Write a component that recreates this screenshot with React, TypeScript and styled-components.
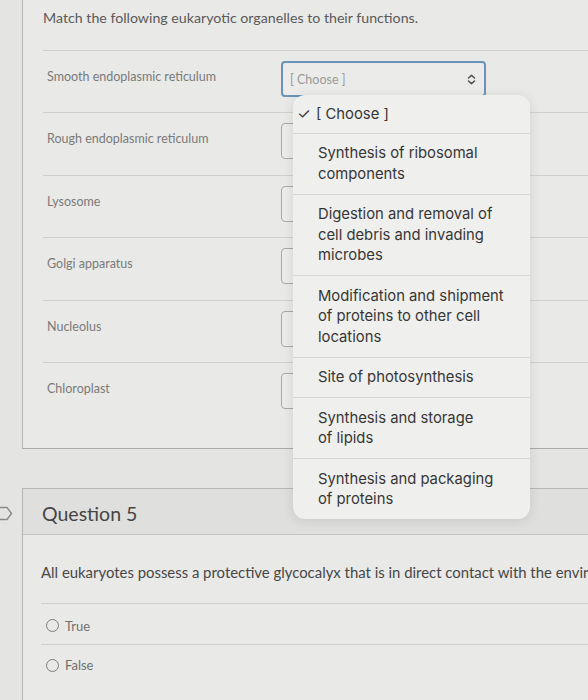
import React from "react";
import styled, { createGlobalStyle } from "styled-components";

const GlobalStyle = createGlobalStyle`
  html, body {
    margin: 0;
    padding: 0;
    background: #e4e4e2;
  }
  body {
    font-family: Lato, "Open Sans", sans-serif;
  }
`;

const organelles = [
  "Smooth endoplasmic reticulum",
  "Rough endoplasmic reticulum",
  "Lysosome",
  "Golgi apparatus",
  "Nucleolus",
  "Chloroplast",
];

const options: string[][] = [
  ["Synthesis of ribosomal", "components"],
  ["Digestion and removal of", "cell debris and invading", "microbes"],
  ["Modification and shipment", "of proteins to other cell", "locations"],
  ["Site of photosynthesis"],
  ["Synthesis and storage", "of lipids"],
  ["Synthesis and packaging", "of proteins"],
];

const Page = styled.div`
  position: relative;
  display: flex;
  flex-direction: column;
  width: 588px;
  height: 700px;
  overflow: hidden;
  padding-left: 22px;
  box-sizing: border-box;
  background: #e4e4e2;
`;

const Card = styled.section<{ $top?: number }>`
  flex-shrink: 0;
  margin-top: ${(p) => p.$top ?? 0}px;
  width: 620px;
  border-left: 1px solid #b4b4b2;
  background: #e9e9e7;
  box-sizing: border-box;
`;

const MatchCard = styled(Card)`
  padding-left: 20px;
  border-bottom: 1px solid #a9a9a7;
`;

const QuestionCard = styled(Card)`
  flex: 1 0 auto;
`;

const Prompt = styled.div`
  height: 51px;
  box-sizing: border-box;
  padding-top: 10px;
  font-size: 14.2px;
  line-height: 16px;
  color: #5a5a5a;
  border-bottom: 1px solid #cfcfcd;
`;

const Row = styled.div<{ $last?: boolean }>`
  display: flex;
  align-items: flex-start;
  height: ${(p) => (p.$last ? 85 : 62.4)}px;
  box-sizing: border-box;
  padding-top: 10px;
  border-bottom: ${(p) => (p.$last ? "none" : "1px solid #cfcfcd")};
`;

const Label = styled.div`
  width: 238px;
  padding: 8px 0 0 4px;
  box-sizing: border-box;
  font-size: 12.5px;
  line-height: 16px;
  color: #7a7a7a;
`;

const Select = styled.div<{ $focused?: boolean }>`
  display: flex;
  align-items: center;
  justify-content: space-between;
  width: 205px;
  height: 36px;
  box-sizing: border-box;
  padding: ${(p) => (p.$focused ? "0 8px 0 7px" : "0 8px 0 14px")};
  border: ${(p) => (p.$focused ? "2px solid #6a93ba" : "1px solid #a8a8a6")};
  border-radius: 4px;
  background: #ebebe9;
  font-size: 12.5px;
  color: #9a9a9a;
`;

const Menu = styled.div`
  position: absolute;
  left: 293px;
  top: 95px;
  width: 237px;
  border-radius: 12px;
  background: #efefed;
  box-shadow: 0 2px 12px rgba(0, 0, 0, 0.1);
  overflow: hidden;
  font-family: Inter, "Liberation Sans", sans-serif;
`;

const MenuItem = styled.div<{ $first?: boolean }>`
  padding: ${(p) => (p.$first ? "9px 12px 8px 23px" : "9.5px 12px 9.5px 25px")};
  font-size: 14.8px;
  line-height: 20.5px;
  color: #363636;
  & + & {
    border-top: 1px solid #d6d6d4;
  }
`;

const Check = styled.span`
  display: inline-block;
  width: 19px;
  margin-left: -19px;
  font-size: 15.5px;
  color: #3a3a3a;
`;

const Header = styled.div`
  position: relative;
  display: flex;
  align-items: center;
  height: 47px;
  box-sizing: border-box;
  padding: 4px 0 0 19px;
  border-top: 1px solid #b8b8b6;
  border-bottom: 1px solid #c4c4c2;
  background: #dfdfdd;
  font-size: 19.5px;
  color: #454545;
`;

const Flag = styled.svg`
  position: absolute;
  left: -26px;
  top: 17px;
`;

const Body = styled.div`
  padding-left: 18px;
`;

const QuestionText = styled.div`
  padding: 27px 0 21px;
  font-size: 14.9px;
  line-height: 20px;
  color: #474747;
  white-space: nowrap;
  border-bottom: 1px solid #cdcdcb;
`;

const Answer = styled.div<{ $last?: boolean }>`
  display: flex;
  align-items: center;
  gap: 6px;
  height: 41px;
  box-sizing: border-box;
  padding: ${(p) => (p.$last ? "0 0 0 5px" : "4px 0 0 5px")};
  border-bottom: ${(p) => (p.$last ? "none" : "1px solid #cdcdcb")};
  font-size: 13px;
  color: #707070;
`;

const Radio = styled.span`
  width: 13px;
  height: 13px;
  box-sizing: border-box;
  border: 1.5px solid #7d7d7d;
  border-radius: 50%;
`;

const UpDown = () => (
  <svg width="9" height="11" viewBox="0 0 9 11" fill="none">
    <path d="M1.5 4L4.5 1.3L7.5 4" stroke="#555" strokeWidth="1.6" strokeLinecap="round" strokeLinejoin="round" />
    <path d="M1.5 7L4.5 9.7L7.5 7" stroke="#555" strokeWidth="1.6" strokeLinecap="round" strokeLinejoin="round" />
  </svg>
);

export default function App() {
  return (
    <>
      <GlobalStyle />
      <Page>
        <MatchCard>
          <Prompt>Match the following eukaryotic organelles to their functions.</Prompt>
          {organelles.map((name, i) => (
            <Row key={name} $last={i === organelles.length - 1}>
              <Label>{name}</Label>
              <Select $focused={i === 0}>
                <span>[ Choose ]</span>
                {i === 0 && <UpDown />}
              </Select>
            </Row>
          ))}
        </MatchCard>

        <QuestionCard $top={39}>
          <Header>
            <Flag width="16" height="15" viewBox="0 0 16 15" fill="none">
              <path d="M1 1.5H10L14.5 7.5L10 13.5H1Z" stroke="#8a8a8a" strokeWidth="1.4" strokeLinejoin="round" />
            </Flag>
            Question 5
          </Header>
          <Body>
            <QuestionText>
              All eukaryotes possess a protective glycocalyx that is in direct contact with the environment.
            </QuestionText>
            <Answer>
              <Radio />
              True
            </Answer>
            <Answer $last>
              <Radio />
              False
            </Answer>
          </Body>
        </QuestionCard>

        <Menu>
          <MenuItem $first>
            <Check>✓</Check>[ Choose ]
          </MenuItem>
          {options.map((lines) => (
            <MenuItem key={lines.join(" ")}>
              {lines.map((l, j) => (
                <React.Fragment key={l}>
                  {j > 0 && <br />}
                  {l}
                </React.Fragment>
              ))}
            </MenuItem>
          ))}
        </Menu>
      </Page>
    </>
  );
}
